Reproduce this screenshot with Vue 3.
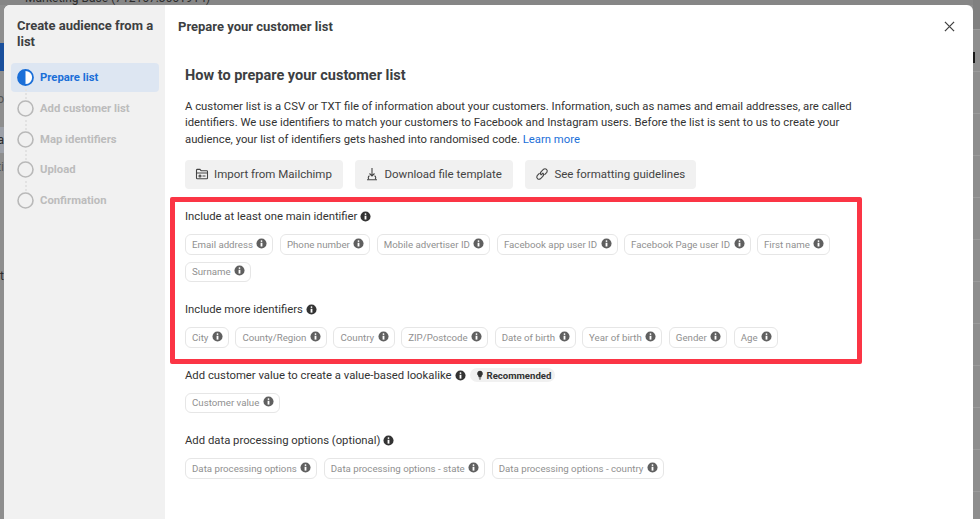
<script setup>
const steps = ['Prepare list', 'Add customer list', 'Map identifiers', 'Upload', 'Confirmation']
const sections = [
  { title: 'Include at least one main identifier', chips: ['Email address', 'Phone number', 'Mobile advertiser ID', 'Facebook app user ID', 'Facebook Page user ID', 'First name', 'Surname'] },
  { title: 'Include more identifiers', chips: ['City', 'County/Region', 'Country', 'ZIP/Postcode', 'Date of birth', 'Year of birth', 'Gender', 'Age'] },
  { title: 'Add customer value to create a value-based lookalike', badge: 'Recommended', chips: ['Customer value'] },
  { title: 'Add data processing options (optional)', chips: ['Data processing options', 'Data processing options - state', 'Data processing options - country'] }
]
const scraps = [
  { text: 'Marketing Base (712167.3661914)', cls: 'scrap-top' },
  { text: 'ro', cls: 'scrap-a' },
  { text: 'a', cls: 'scrap-b' },
  { text: 'ti', cls: 'scrap-c' },
  { text: 't', cls: 'scrap-d' }
]
</script>

<template>
  <div class="page">
    <div class="backdrop">
      <span class="blue"></span>
      <span class="pale"></span>
      <span class="mark"></span>
      <span v-for="s in scraps" :key="s.cls" class="scrap" :class="s.cls">{{ s.text }}</span>
    </div>
    <div class="modal">
      <aside class="side">
        <h2 class="side-title">Create audience from a list</h2>
        <ol class="steps">
          <li v-for="(s, i) in steps" :key="s" class="step" :class="{ active: i === 0 }">
            <svg class="step-icon" viewBox="0 0 17 17">
              <template v-if="i === 0">
                <circle cx="8.5" cy="8.5" r="7.5" fill="#fff" stroke="#1b6fd8" stroke-width="1.8" />
                <path d="M8.5 1a7.5 7.5 0 0 0 0 15z" fill="#1b6fd8" />
              </template>
              <circle v-else cx="8.5" cy="8.5" r="7.5" fill="none" stroke="#b9b9b9" stroke-width="1.6" />
            </svg>
            <span>{{ s }}</span>
          </li>
        </ol>
      </aside>
      <main class="main">
        <header class="head">
          <h1>Prepare your customer list</h1>
          <svg class="close" viewBox="0 0 12 12"><path d="M1 1l10 10M11 1L1 11" stroke="#444" stroke-width="1.4" fill="none" /></svg>
        </header>
        <div class="body">
          <h2 class="how">How to prepare your customer list</h2>
          <p class="intro">A customer list is a CSV or TXT file of information about your customers. Information, such as names and email addresses, are called<br />identifiers. We use identifiers to match your customers to Facebook and Instagram users. Before the list is sent to us to create your<br />audience, your list of identifiers gets hashed into randomised code. <a>Learn more</a></p>
          <div class="actions">
            <button class="btn">
              <svg viewBox="0 0 14 14" fill="none" stroke="#444" stroke-width="1.1"><path d="M1.500 11V3.200c0-.5.3-.8.800-.8h2.600l1.200 1.300h5.600c.5 0 .8.300.8.800V11c0 .5-.3.800-.8.800H2.300c-.5 0-.8-.3-.8-.8z" /><path d="M1.500 6h11" /><circle cx="5" cy="9" r="1" /><path d="M7.500 9h3" /></svg>
              Import from Mailchimp
            </button>
            <button class="btn">
              <svg viewBox="0 0 14 14" fill="none" stroke="#444" stroke-width="1.1"><path d="M7 1v8M4.500 6.500L7 9l2.500-2.500" /><path d="M2 12.800h10" /><path d="M4.500 8.800c-1.400.8-1.600 2.400-.6 3.500M9.500 8.800c1.400.8 1.600 2.400.6 3.500" /></svg>
              Download file template
            </button>
            <button class="btn">
              <svg viewBox="0 0 14 14" fill="none" stroke="#444" stroke-width="1.1"><path d="M5.800 8.200l2.400-2.400" /><path d="M4.600 6.200L2.200 8.600a2.300 2.300 0 0 0 3.200 3.200L7.800 9.400a2.300 2.300 0 0 0 0-3.200" /><path d="M9.400 7.800l2.400-2.400a2.300 2.300 0 0 0-3.200-3.200L6.200 4.600a2.300 2.300 0 0 0 0 3.200" /></svg>
              See formatting guidelines
            </button>
          </div>
          <section v-for="sec in sections" :key="sec.title" class="section">
            <div class="label">
              <span>{{ sec.title }}</span>
              <svg class="info dark" viewBox="0 0 12 12"><circle cx="6" cy="6" r="5.500" fill="currentColor" /><circle cx="6" cy="3.400" r="1" fill="#fff" /><path d="M5 5.200h2v4.200H5z" fill="#fff" /></svg>
              <span v-if="sec.badge" class="badge">
                <svg viewBox="0 0 10 12"><path d="M5 .8a3.500 3.500 0 0 0-2 6.400v1.200h4V7.200A3.500 3.500 0 0 0 5 .8z" fill="#333" /><path d="M3.500 9.500h3M4 11h2" stroke="#333" stroke-width="1" /></svg>
                {{ sec.badge }}
              </span>
            </div>
            <div class="chips">
              <span v-for="c in sec.chips" :key="c" class="chip">
                {{ c }}
                <svg class="info" viewBox="0 0 12 12"><circle cx="6" cy="6" r="5.500" fill="currentColor" /><circle cx="6" cy="3.400" r="1" fill="#fff" /><path d="M5 5.200h2v4.200H5z" fill="#fff" /></svg>
              </span>
            </div>
          </section>
        </div>
      </main>
    </div>
    <div class="highlight"></div>
  </div>
</template>

<style scoped>
.page {
  position: relative;
  width: 980px;
  height: 519px;
  overflow: hidden;
  background: #8e8e8e;
  padding: 5px 7px 0 4px;
  box-sizing: border-box;
  font-family: Roboto, "Liberation Sans", sans-serif;
}
.backdrop {
  position: absolute;
  inset: 0;
  background:
    linear-gradient(#808080 0 29px, transparent 29px) 973px 0 / 7px 100% no-repeat,
    repeating-linear-gradient(#9b9b9b 0 1px, transparent 1px 42px) 973px 29px / 7px 14px no-repeat,
    repeating-linear-gradient(#9b9b9b 0 1px, transparent 1px 42px) 973px 71px / 7px 100% no-repeat,
    linear-gradient(#868686 0 5px, transparent 5px);
}
.blue {
  position: absolute;
  left: 0;
  top: 43px;
  width: 4px;
  height: 28px;
  background: #1a4f9c;
}
.pale {
  position: absolute;
  left: 0;
  top: 127px;
  width: 4px;
  height: 26px;
  background: #9ca0a8;
}
.mark {
  position: absolute;
  left: 973px;
  top: 52px;
  width: 2px;
  height: 11px;
  background: #1a1a1a;
}
.scrap {
  position: absolute;
  font-size: 12px;
  line-height: 14px;
  color: #2c2c2c;
}
.scrap-top {
  left: 25px;
  top: -9px;
}
.scrap-a {
  right: 976px;
  top: 92px;
  color: #555;
}
.scrap-b {
  right: 976px;
  top: 133px;
}
.scrap-c {
  right: 976px;
  top: 160px;
  color: #555;
}
.scrap-d {
  right: 976px;
  top: 269px;
}
.modal {
  position: relative;
  display: flex;
  height: 514px;
  background: #fff;
  border-radius: 6px 6px 0 0;
  overflow: hidden;
}
.side {
  width: 161px;
  flex: none;
  background: #f1f1f1;
  box-sizing: border-box;
  padding: 13px 6px 0 7px;
}
.side-title {
  margin: 0 0 0 6px;
  font-size: 13px;
  line-height: 16px;
  font-weight: 700;
  color: #3d3f42;
}
.steps {
  list-style: none;
  margin: 13px 0 0;
  padding: 0;
}
.step {
  position: relative;
  display: flex;
  align-items: center;
  gap: 6px;
  height: 29px;
  margin-bottom: 1.750px;
  padding: 0 6px;
  border-radius: 4px;
  font-size: 11.300px;
  font-weight: 700;
  color: #bcbcbc;
}
.step + .step::before {
  content: "";
  position: absolute;
  left: 13.500px;
  top: -5px;
  height: 10px;
  border-left: 2px dotted #e2e2e2;
}
.step.active {
  background: #dde6f2;
  color: #1b6fd8;
}
.step-icon {
  width: 17px;
  height: 17px;
  flex: none;
}
.main {
  flex: 1;
  min-width: 0;
}
.head {
  display: flex;
  justify-content: space-between;
  align-items: center;
  height: 42px;
  padding: 0 18px 0 13px;
}
.head h1 {
  margin: 0;
  font-size: 13px;
  font-weight: 700;
  color: #3d3f42;
}
.close {
  width: 11px;
  height: 11px;
}
.body {
  padding: 0 20px;
}
.how {
  margin: 20px 0 0;
  font-size: 14.500px;
  line-height: 18px;
  font-weight: 700;
  color: #3d3f42;
}
.intro {
  margin: 13.500px 0 0;
  font-size: 11.300px;
  line-height: 16.500px;
  color: #333;
}
.intro a {
  color: #1b6fd8;
}
.actions {
  display: flex;
  gap: 12.500px;
  margin-top: 11.500px;
}
.btn {
  display: flex;
  align-items: center;
  gap: 5px;
  height: 29px;
  padding: 0 11px 0 10px;
  border: 0;
  border-radius: 4px;
  background: #f1f1f1;
  font: 400 11.500px Roboto, "Liberation Sans", sans-serif;
  color: #444;
}
.btn svg {
  width: 14px;
  height: 14px;
}
.section {
  margin-top: 20.500px;
}
.actions + .section {
  margin-top: 21px;
}
.label {
  display: flex;
  align-items: center;
  gap: 3px;
  height: 14px;
  font-size: 11.300px;
  color: #333;
}
.info {
  width: 11px;
  height: 11px;
  flex: none;
  color: #5f5f5f;
}
.info.dark {
  color: #333;
}
.badge {
  display: inline-flex;
  align-items: center;
  gap: 3px;
  height: 14px;
  margin-left: 1px;
  padding: 0 4px 0 6px;
  border-radius: 7px;
  background: #f1f1f1;
  font-size: 9.600px;
  font-weight: 700;
}
.badge svg {
  width: 8px;
  height: 10px;
}
.chips {
  display: flex;
  flex-wrap: wrap;
  gap: 7px 6.500px;
  margin-top: 10.500px;
  max-width: 680px;
}
.chip {
  display: inline-flex;
  align-items: center;
  gap: 3.500px;
  height: 20.500px;
  box-sizing: border-box;
  padding: 0 5px 0 6px;
  border: 1px solid #e6e6e6;
  border-radius: 6px;
  font-size: 9.700px;
  color: #909090;
}
.chip .info {
  margin-bottom: 2px;
}
.highlight {
  position: absolute;
  left: 170px;
  top: 197px;
  width: 692px;
  height: 167px;
  box-sizing: border-box;
  border: 5.500px solid #fb3545;
  border-radius: 2px;
}
</style>
